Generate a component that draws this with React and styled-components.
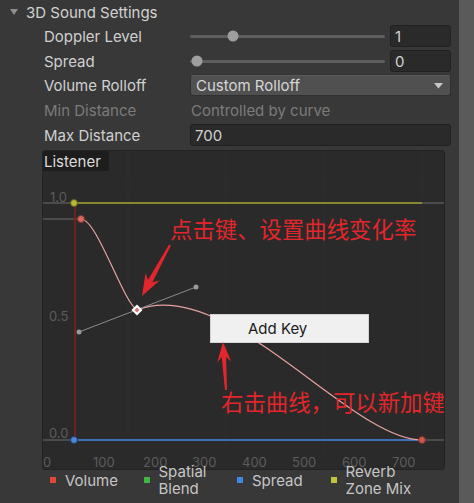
import React from "react";
import styled, { createGlobalStyle } from "styled-components";

const Global = createGlobalStyle`
  html, body { margin: 0; padding: 0; background: #383838; }
  body { font-family: Inter, "Noto Sans", sans-serif; }
`;

const Page = styled.div`
  display: flex;
  width: 474px;
  height: 503px;
  overflow: hidden;
  background: #383838;
`;

const Inspector = styled.div`
  flex: 1;
  display: flex;
  flex-direction: column;
  padding-right: 8px;
  min-width: 0;
`;

const Scrollbar = styled.div`
  flex: 0 0 15px;
  background: #5a5a5a;
`;

const FoldoutHeader = styled.div`
  height: 24px;
  display: flex;
  align-items: center;
  gap: 8px;
  padding-left: 10px;
  font-size: 15px;
  color: #d2d2d2;
`;

const PropRow = styled.div`
  display: grid;
  grid-template-columns: 146px 1fr;
  align-items: center;
  height: 24.75px;
  padding-left: 44px;
  font-size: 15px;
`;

const Label = styled.span`
  color: ${(p) => (p.$disabled ? "#7b7b7b" : "#d0d0d0")};
  white-space: nowrap;
`;

const SliderControl = styled.div`
  display: flex;
  align-items: center;
  gap: 5px;
`;

const SliderTrack = styled.div`
  position: relative;
  flex: 0 0 195px;
  height: 21px;
  &::before {
    content: "";
    position: absolute;
    left: 0;
    right: 0;
    top: 50%;
    height: 3px;
    margin-top: -1.5px;
    border-radius: 2px;
    background: #5e5e5e;
  }
`;

const Thumb = styled.div`
  position: absolute;
  top: 50%;
  width: 11px;
  height: 11px;
  border-radius: 50%;
  background: #9e9e9e;
  transform: translate(-50%, -50%);
`;

const Field = styled.div`
  flex: 1;
  height: 22px;
  box-sizing: border-box;
  background: #2a2a2a;
  border: 1px solid #212121;
  border-radius: 3px;
  padding: 0 4px;
  display: flex;
  align-items: center;
  color: #d2d2d2;
  font-size: 15px;
`;

const Dropdown = styled.div`
  height: 21px;
  box-sizing: border-box;
  background: #505050;
  border: 1px solid #303030;
  border-top-color: #595959;
  border-radius: 3px;
  padding: 0 7px 0 5px;
  display: flex;
  align-items: center;
  justify-content: space-between;
  color: #d6d6d6;
  font-size: 15px;
`;

const MutedValue = styled.span`
  color: #7b7b7b;
  padding-left: 1px;
`;

const CurvePanel = styled.div`
  position: relative;
  margin: 2.25px 6px 0 42px;
  height: 320px;
  box-sizing: border-box;
  border: 1px solid #232323;
  border-radius: 3px;
  background: #2a2a2a;
  overflow: hidden;
`;

const Chart = styled.svg`
  display: block;
  width: 409px;
  height: 318px;
`;

const Overlay = styled.svg`
  position: absolute;
  left: 0;
  top: 0;
  width: 409px;
  height: 318px;
  pointer-events: none;
`;

const ListenerTab = styled.div`
  position: absolute;
  left: 0;
  top: 0;
  height: 20px;
  padding: 0 8px 0 1px;
  display: flex;
  align-items: center;
  background: #1d1d1d;
  border-bottom-right-radius: 3px;
  color: #dcdcdc;
  font-size: 15px;
`;

const Annotation = styled.div`
  position: absolute;
  left: ${(p) => p.$x}px;
  top: ${(p) => p.$y}px;
  color: #e3262b;
  font-family: "Noto Sans CJK SC", sans-serif;
  font-size: 22.4px;
  line-height: 1;
  white-space: nowrap;
`;

const ContextMenu = styled.div`
  position: absolute;
  left: 167px;
  top: 163px;
  width: 159px;
  height: 29px;
  box-sizing: border-box;
  background: #f0f0f0;
  border: 1px solid #d4d4d4;
  padding-left: 37px;
  display: flex;
  align-items: center;
  color: #1b1b1b;
  font-size: 15px;
`;

const Legend = styled.div`
  position: relative;
  display: flex;
  height: 20px;
  padding-left: 50px;
`;

const LegendItem = styled.div`
  flex: 0 0 93.5px;
  display: flex;
  align-items: center;
  gap: 9px;
`;

const Swatch = styled.span`
  flex: 0 0 6px;
  height: 6px;
  background: ${(p) => p.$color};
`;

const LegendText = styled.span`
  font-size: 15px;
  line-height: 17px;
  color: #c6c6c6;
  white-space: pre-line;
`;

function Slider({ value }) {
  const left = 7 + value * (195 - 14);
  return (
    <SliderTrack>
      <Thumb style={{ left: `${left}px` }} />
    </SliderTrack>
  );
}

const xLabels = [
  [43, "0"],
  [93, "100"],
  [143, "200"],
  [192, "300"],
  [242, "400"],
  [292, "500"],
  [342, "600"],
  [392, "700"],
];

function CurveChart() {
  return (
    <Chart viewBox="43 151 409 318">
      <g stroke="#2e2e2e" strokeWidth="1">
        <line x1="128" y1="151" x2="128" y2="452" />
        <line x1="226" y1="151" x2="226" y2="452" />
        <line x1="324" y1="151" x2="324" y2="452" />
        <line x1="422" y1="151" x2="422" y2="452" />
        <line x1="43" y1="184" x2="452" y2="184" />
      </g>
      <g fill="#5c5c5c" fontFamily="Inter, sans-serif" fontSize="13">
        <text x="50" y="202">1.0</text>
        <text x="49" y="321">0.5</text>
        <text x="49" y="438">0.0</text>
        {xLabels.map(([x, t]) => (
          <text key={t} x={x} y="467">{t}</text>
        ))}
      </g>
      <g stroke="#6c6c6c" strokeWidth="1">
        <line x1="43" y1="203" x2="74" y2="203" />
        <line x1="422" y1="203" x2="452" y2="203" />
        <line x1="43" y1="219" x2="81" y2="219" />
        <line x1="43" y1="440" x2="74" y2="440" />
        <line x1="422" y1="440" x2="452" y2="440" />
      </g>
      <line x1="75" y1="203" x2="75" y2="440" stroke="#6a2222" strokeWidth="2" />
      <line x1="74" y1="203" x2="422" y2="203" stroke="#a4a734" strokeWidth="1.5" />
      <line x1="74" y1="440" x2="422" y2="440" stroke="#3e6fb5" strokeWidth="2" />
      <path
        d="M81,219 C97,219 122,300 137,310 C227,275 350,440 422,440"
        fill="none"
        stroke="#e6a2a0"
        strokeWidth="1.2"
      />
      <line x1="79" y1="332" x2="196" y2="287" stroke="#8c8c8c" strokeWidth="1" />
      <circle cx="79" cy="332" r="2.5" fill="#9a9a9a" />
      <circle cx="196" cy="287" r="2.5" fill="#9a9a9a" />
      <circle cx="74" cy="203" r="3.5" fill="#b8b83c" stroke="#5d5d1a" strokeWidth="1" />
      <circle cx="81" cy="219" r="3.5" fill="#d66a5e" stroke="#8a2e2e" strokeWidth="1" />
      <circle cx="74" cy="440" r="3.5" fill="#4c86d8" stroke="#1c3966" strokeWidth="1" />
      <circle cx="422" cy="440" r="3.5" fill="#c85a52" stroke="#7a2a2a" strokeWidth="1" />
      <polygon points="137,304.5 142.5,310 137,315.5 131.5,310" fill="#ffffff" />
      <polygon points="137,307.5 139.5,310 137,312.5 134.5,310" fill="#e07070" />
    </Chart>
  );
}

function Arrows() {
  return (
    <Overlay viewBox="43 151 409 318">
      <polygon
        fill="#e3262b"
        points="170.9,245.5 152.4,282.3 159.6,280.5 142,296 145.6,272.9 148,279.9 169.1,244.5"
      />
      <polygon
        fill="#e3262b"
        points="227,389.9 226.1,356.9 231.2,361.5 223,342 217.3,362.4 221.7,357.1 225,390.1"
      />
    </Overlay>
  );
}

export default function App() {
  return (
    <>
      <Global />
      <Page>
        <Inspector>
          <FoldoutHeader>
            <svg width="8" height="8" viewBox="0 0 8 8">
              <polygon points="0,1 8,1 4,7" fill="#8e8e8e" />
            </svg>
            <span>3D Sound Settings</span>
          </FoldoutHeader>
          <PropRow>
            <Label>Doppler Level</Label>
            <SliderControl>
              <Slider value={0.2} />
              <Field>1</Field>
            </SliderControl>
          </PropRow>
          <PropRow>
            <Label>Spread</Label>
            <SliderControl>
              <Slider value={0} />
              <Field>0</Field>
            </SliderControl>
          </PropRow>
          <PropRow>
            <Label>Volume Rolloff</Label>
            <Dropdown>
              <span>Custom Rolloff</span>
              <svg width="9" height="6" viewBox="0 0 9 6">
                <polygon points="0,0 9,0 4.5,5.5" fill="#c8c8c8" />
              </svg>
            </Dropdown>
          </PropRow>
          <PropRow>
            <Label $disabled>Min Distance</Label>
            <MutedValue>Controlled by curve</MutedValue>
          </PropRow>
          <PropRow>
            <Label>Max Distance</Label>
            <Field>700</Field>
          </PropRow>
          <CurvePanel>
            <CurveChart />
            <ListenerTab>Listener</ListenerTab>
            <Annotation $x={127} $y={66}>点击键、设置曲线变化率</Annotation>
            <ContextMenu>Add Key</ContextMenu>
            <Annotation $x={178} $y={239}>右击曲线，可以新加键</Annotation>
            <Arrows />
          </CurvePanel>
          <Legend>
            <LegendItem>
              <Swatch $color="#e0493a" />
              <LegendText>Volume</LegendText>
            </LegendItem>
            <LegendItem>
              <Swatch $color="#3fb63f" />
              <LegendText>{"Spatial\nBlend"}</LegendText>
            </LegendItem>
            <LegendItem>
              <Swatch $color="#3d8be0" />
              <LegendText>Spread</LegendText>
            </LegendItem>
            <LegendItem>
              <Swatch $color="#c2c23a" />
              <LegendText>{"Reverb\nZone Mix"}</LegendText>
            </LegendItem>
          </Legend>
        </Inspector>
        <Scrollbar />
      </Page>
    </>
  );
}
